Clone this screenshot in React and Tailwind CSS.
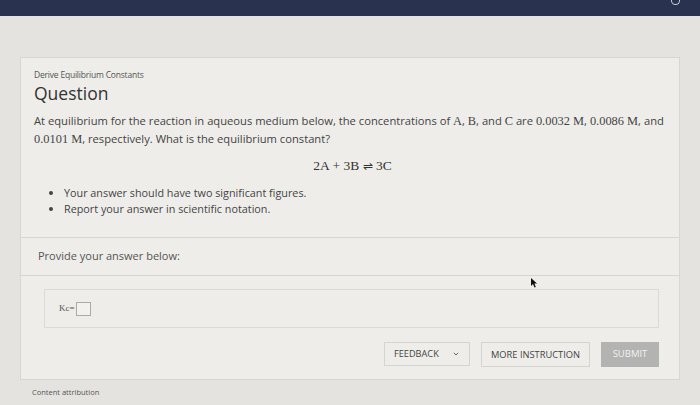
const sans = { fontFamily: '"Open Sans", "Noto Sans", sans-serif' };

function Serif({ children }) {
  return <span className="font-['Liberation_Serif',serif] text-[12.4px] leading-[0]">{children}</span>;
}

export default function App() {
  return (
    <div className="w-[700px] h-[405px] overflow-hidden bg-[#e5e3df] relative font-['Open_Sans',sans-serif] text-[#3f3f3f]">
      {/* top bar */}
      <div className="h-[16px] bg-[#29334f] flex justify-end pr-[20px]">
        <div className="w-[9px] h-[5px] rounded-b-full border-x border-b border-[#c9ccd6]" />
      </div>

      <div className="pt-[41px] pl-[20px] pr-[20px]">
        {/* card */}
        <div className="border border-[#d8d6d2] bg-[#eeedea]">
          {/* question */}
          <div className="pl-[13px] pr-[8px] pt-[10px] pb-[20px] border-b border-[#d8d6d2]">
            <div className="text-[8.5px] leading-[13px] text-[#555] tracking-[-0.2px]">Derive Equilibrium Constants</div>
            <div className="text-[17.5px] leading-[24px] text-[#333]">Question</div>
            <p className="mt-[7px] text-[11.2px] leading-[18px] text-[#444]">
              At equilibrium for the reaction in aqueous medium below, the concentrations of <Serif>A</Serif>, <Serif>B</Serif>, and <Serif>C</Serif> are <Serif>0.0032 M</Serif>, <Serif>0.0086 M</Serif>, and <Serif>0.0101 M</Serif>, respectively. What is the equilibrium constant?
            </p>
            <div className="mt-[9px] text-center font-['Liberation_Serif',serif] text-[13.5px] leading-[18px] text-[#333]">
              2A + 3B <span className="text-[12px]">⇌</span> 3C
            </div>
            <ul className="mt-[10px] pl-[30px] list-disc text-[10.8px] leading-[16px] text-[#444]">
              <li>Your answer should have two significant figures.</li>
              <li>Report your answer in scientific notation.</li>
            </ul>
          </div>

          {/* prompt */}
          <div className="h-[38px] flex items-center pl-[17px] border-b border-[#d8d6d2] text-[11px] text-[#555]">
            Provide your answer below:
          </div>

          {/* answer area */}
          <div className="pl-[23px] pr-[20px] pt-[13px] pb-[12px]">
            <div className="h-[39px] border border-[#dcdad6] flex items-center pl-[14px]">
              <span className="font-['Liberation_Serif',serif] text-[9px] text-[#555]">Kc=</span>
              <span className="w-[15px] h-[14px] border border-[#aaa] bg-[#f2f1ee] ml-[1px]" />
            </div>
            <div className="mt-[14px] flex justify-end gap-[11px]">
              <button className="h-[24px] w-[86px] border border-[#d6d4d0] flex items-center justify-between pl-[9px] pr-[10px] text-[9.2px] text-[#444]" style={sans}>
                FEEDBACK
                <svg width="6" height="4" viewBox="0 0 6 4"><path d="M0.8 0.8 L3 3 L5.2 0.8" fill="none" stroke="#666" strokeWidth="1" /></svg>
              </button>
              <button className="h-[25px] w-[109px] border border-[#d6d4d0] text-[9.3px] text-[#444]" style={sans}>
                MORE INSTRUCTION
              </button>
              <button className="h-[25px] w-[58px] bg-[#b3b4b2] text-[9.5px] text-[#f0f1f1]" style={sans}>
                SUBMIT
              </button>
            </div>
          </div>
        </div>
        <div className="pl-[12px] pt-[7px] text-[7.5px] text-[#555]">Content attribution</div>
      </div>

      {/* mouse pointer */}
      <svg className="absolute left-[531px] top-[278px]" width="7" height="10" viewBox="0 0 7 10">
        <path d="M0 0 L0 8 L2 6 L3.5 9.5 L4.8 9 L3.4 5.6 L6 5.6 Z" fill="#111" />
      </svg>
    </div>
  );
}
